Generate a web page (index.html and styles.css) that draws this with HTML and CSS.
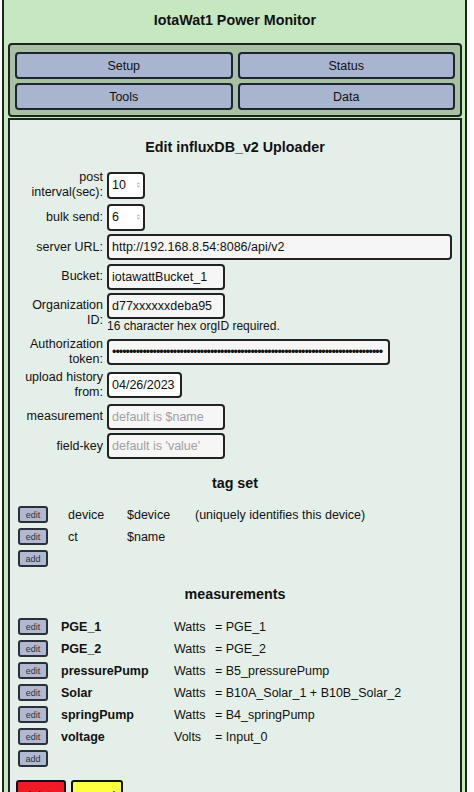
FILE: index.html
```html
<!DOCTYPE html>
<html lang="en">
<head>
    <meta charset="UTF-8">
    <meta name="viewport" content="width=device-width, initial-scale=1.0">
    <title>IotaWatt</title>
    <link rel="stylesheet" href="styles.css">
</head>
<body>
    <div class="page">
        <div class="header">IotaWat1 Power Monitor</div>
        <div class="nav">
            <button>Setup</button>
            <button>Status</button>
            <button>Tools</button>
            <button>Data</button>
        </div>
        <div class="panel">
            <h2>Edit influxDB_v2 Uploader</h2>
            <div class="form">
                <label>post<br>interval(sec):</label>
                <div class="cell">
                    <div class="box num">
                        <input type="text" value="10">
                        <svg width="7" height="14" viewBox="0 0 7 14"><path d="M1 5.5 L3.5 2 L6 5.5 M1 8.5 L3.5 12 L6 8.5" fill="none" stroke="#555" stroke-width="1.2"/></svg>
                    </div>
                </div>
                <label>bulk send:</label>
                <div class="cell">
                    <div class="box num">
                        <input type="text" value="6">
                        <svg width="7" height="14" viewBox="0 0 7 14"><path d="M1 5.5 L3.5 2 L6 5.5 M1 8.5 L3.5 12 L6 8.5" fill="none" stroke="#555" stroke-width="1.2"/></svg>
                    </div>
                </div>
                <label>server URL:</label>
                <div class="cell"><input class="box url" type="text" value="http://192.168.8.54:8086/api/v2"></div>
                <label>Bucket:</label>
                <div class="cell"><input class="box mid" type="text" value="iotawattBucket_1"></div>
                <label>Organization<br>ID:</label>
                <div class="cell">
                    <input class="box mid" type="text" value="d77xxxxxxdeba95">
                    <div class="help">16 character hex orgID required.</div>
                </div>
                <label>Authorization<br>token:</label>
                <div class="cell"><input class="box token" type="password" value="xxxxxxxxxxxxxxxxxxxxxxxxxxxxxxxxxxxxxxxxxxxxxxxxxxxxxxxxxxxxxxxxxxxxxxxxxxxxxxxx"></div>
                <label>upload history<br>from:</label>
                <div class="cell"><input class="box date" type="text" value="04/26/2023"></div>
                <label>measurement</label>
                <div class="cell"><input class="box mid" type="text" placeholder="default is $name"></div>
                <label>field-key</label>
                <div class="cell"><input class="box mid" type="text" placeholder="default is 'value'"></div>
            </div>

            <h3 class="first">tag set</h3>
            <div class="list tags">
                <button class="small">edit</button><span>device</span><span>$device</span><span>(uniquely identifies this device)</span>
                <button class="small">edit</button><span>ct</span><span>$name</span><span></span>
                <button class="small">add</button><span></span><span></span><span></span>
            </div>

            <h3 class="second">measurements</h3>
            <div class="list meas">
                <button class="small">edit</button><b>PGE_1</b><span>Watts</span><span>= PGE_1</span>
                <button class="small">edit</button><b>PGE_2</b><span>Watts</span><span>= PGE_2</span>
                <button class="small">edit</button><b>pressurePump</b><span>Watts</span><span>= B5_pressurePump</span>
                <button class="small">edit</button><b>Solar</b><span>Watts</span><span>= B10A_Solar_1 + B10B_Solar_2</span>
                <button class="small">edit</button><b>springPump</b><span>Watts</span><span>= B4_springPump</span>
                <button class="small">edit</button><b>voltage</b><span>Volts</span><span>= Input_0</span>
                <button class="small">add</button><span></span><span></span><span></span>
            </div>

            <div class="actions">
                <button class="delete">delete</button>
                <button class="cancel">cancel</button>
            </div>
        </div>
    </div>
</body>
</html>
```

FILE: styles.css
```css
*{
   margin: 0;
   padding: 0;
   box-sizing: border-box;
}
body{
   font-family: "Liberation Sans", Arial, sans-serif;
   font-size: 12.5px;
   color: #111;
   background: #fff;
}
.page{
   width: 465px;
   margin-left: 2px;
   border-left: 2px solid #1c261c;
   border-right: 2px solid #1c261c;
   padding: 0 3px 0 4px;
   background-color: #c6e8c0;
   height: 792px;
   overflow: hidden;
}
.header{
   height: 43px;
   display: flex;
   justify-content: center;
   align-items: center;
   font-weight: bold;
   font-size: 14.3px;
   padding-bottom: 4px;
}
.nav{
   border: 2px solid #1c261c;
   border-radius: 4px;
   background-color: #a8c1a2;
   padding: 7px 5px 5px 5px;
   display: grid;
   grid-template-columns: 1fr 1fr;
   gap: 4px 5px;
}
.nav button{
   height: 27px;
   font-family: inherit;
   font-size: 12.5px;
   color: #111;
   background-color: #a9b4cf;
   border: 2px solid #1f2530;
   border-radius: 4px;
}
.panel{
   margin-top: 1px;
   border: 2px solid #1c261c;
   border-bottom: none;
   background-color: #e5efe9;
   height: 700px;
}
.panel h2{
   text-align: center;
   font-size: 14.3px;
   line-height: 18px;
   margin-top: 18px;
   margin-bottom: 14px;
}
.panel h3{
   text-align: center;
   font-size: 14.3px;
   line-height: 18px;
   margin-top: 17px;
   margin-bottom: 14px;
}
.panel h3.first{
   margin-top: 15px;
}
.panel h3.second{
   margin-top: 18px;
   margin-bottom: 15px;
}
.form{
   display: grid;
   grid-template-columns: 93px 1fr;
   column-gap: 4px;
   row-gap: 3.5px;
   align-items: center;
}
.form label{
   text-align: right;
   line-height: 15px;
}
.box{
   height: 26px;
   border: 2px solid #222;
   border-radius: 4px;
   background-color: #f6f6f6;
   font-family: inherit;
   font-size: 12.5px;
   color: #111;
   padding: 0 3px;
   outline: none;
}
.box::placeholder{
   color: #a0a0a0;
}
.num{
   width: 38px;
   height: 27px;
   display: flex;
   align-items: center;
   background-color: #fff;
}
.num input{
   width: 22px;
   border: none;
   background: none;
   font-family: inherit;
   font-size: 12.5px;
   color: #111;
   outline: none;
}
.num svg{
   margin-left: 3px;
}
.url{
   width: 345px;
}
.mid{
   width: 118px;
}
.token{
   width: 283px;
   letter-spacing: -1px;
}
.date{
   width: 75px;
   background-color: #fff;
}
.help{
   font-size: 12px;
   line-height: 14px;
}
.list{
   display: grid;
   align-items: center;
   row-gap: 5px;
   padding-left: 8px;
}
.tags{
   grid-template-columns: 50px 59px 68px auto;
}
.meas{
   grid-template-columns: 43px 113px 41px auto;
}
.small{
   width: 30px;
   height: 17px;
   font-family: inherit;
   font-size: 9px;
   color: #333;
   background-color: #b1b9d2;
   border: 2px solid #2a2f3a;
   border-radius: 3px;
}
.actions{
   display: flex;
   gap: 5px;
   padding-left: 6px;
   margin-top: 13px;
}
.actions button{
   height: 32px;
   padding: 0 6px;
   font-family: inherit;
   font-size: 12.5px;
   color: #111;
   border-radius: 3px;
   border: 2px solid;
}
.delete{
   background-color: #f01a24;
   border-color: #9a2a2a;
}
.cancel{
   background-color: #ffff40;
   border-color: #9c9c5a;
}
```
